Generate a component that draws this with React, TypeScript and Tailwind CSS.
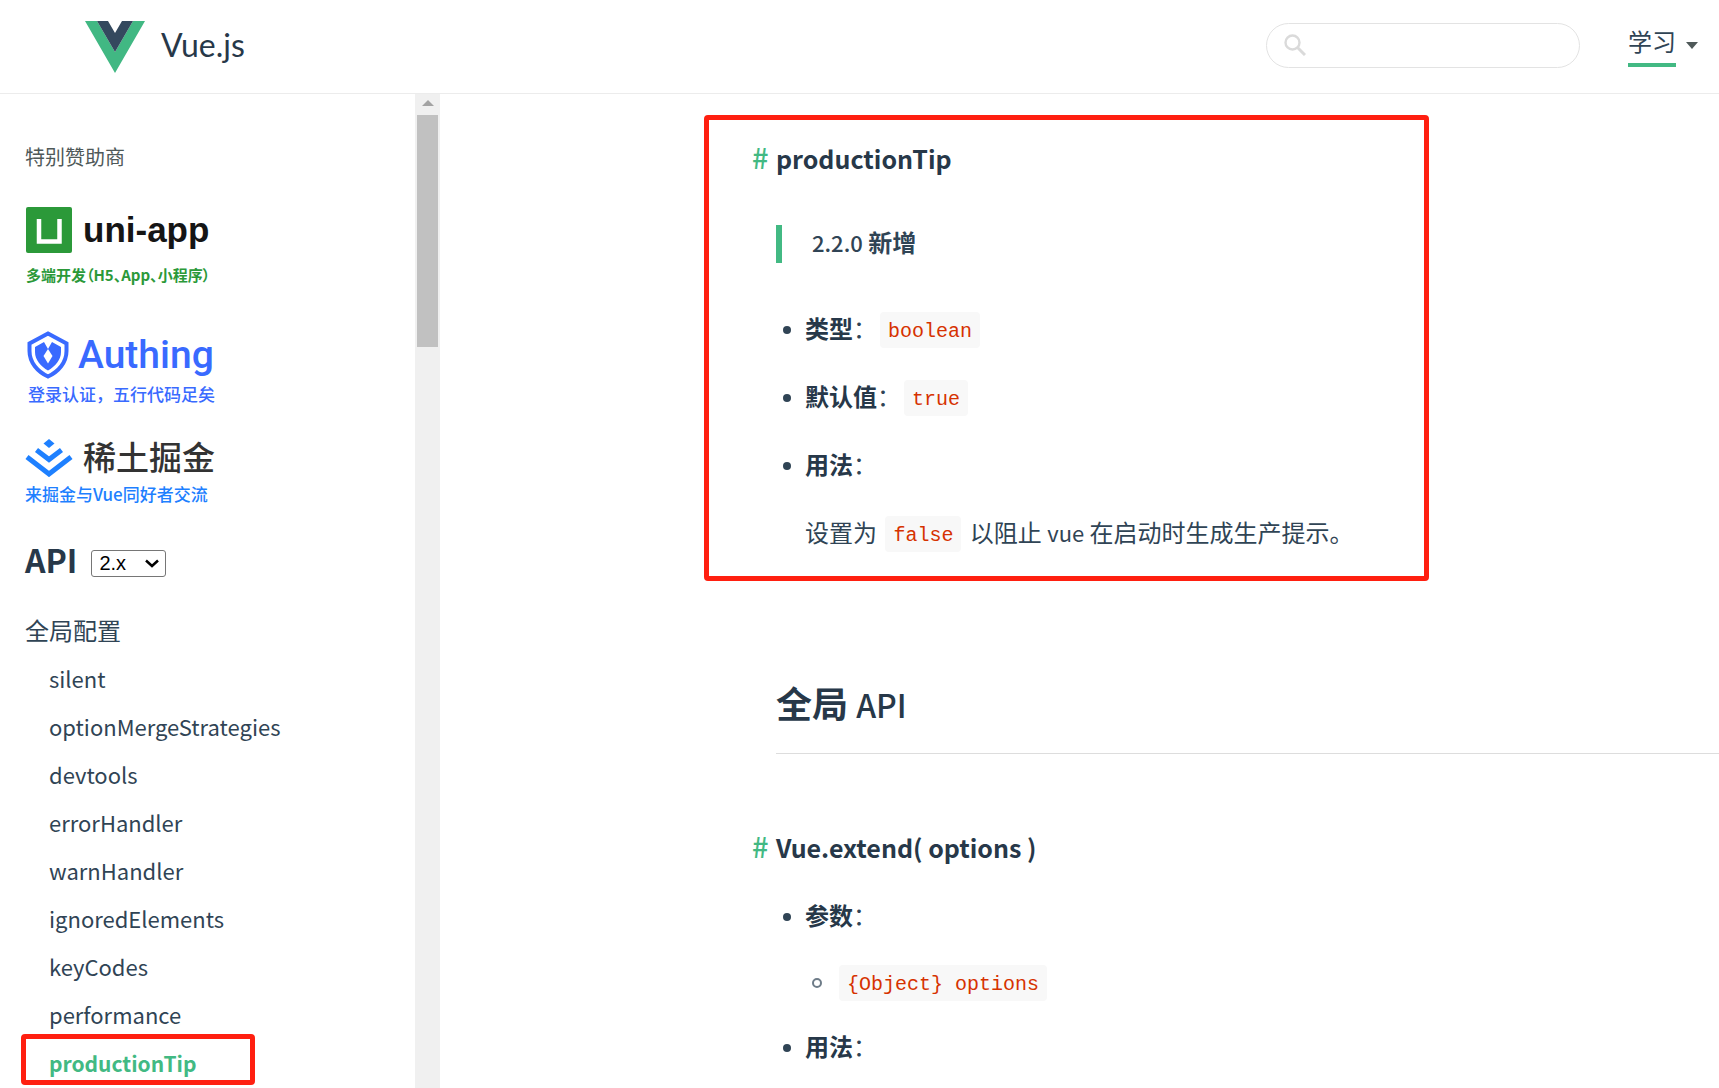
import React from 'react';
import { useState } from 'react';

const menuItems = [
  'silent',
  'optionMergeStrategies',
  'devtools',
  'errorHandler',
  'warnHandler',
  'ignoredElements',
  'keyCodes',
  'performance',
  'productionTip',
];

function Header() {
  return (
    <header className="flex shrink-0 items-center justify-between h-[94px] border-b border-[#ececec] pb-[3px] pl-[85px] pr-[21px]">
      <a href="#" className="flex items-center gap-4">
        <svg viewBox="0 0 60 52" className="w-[60px] h-[52px] mt-1">
          <path d="M0 0H12L30 31L48 0H60L30 52Z" fill="#41b883" />
          <path d="M12 0H23L30 12L37 0H48L30 31Z" fill="#34495e" />
        </svg>
        <span className="font-['Lato',sans-serif] text-[32px] leading-[44px] text-[#273849]">
          Vue.js
        </span>
      </a>

      <div className="flex items-center">
        <label className="flex items-center w-[314px] h-[45px] px-[17px] border border-[#e3e3e3] rounded-full">
          <svg viewBox="0 0 22 22" className="w-[22px] h-[22px] shrink-0" fill="none" stroke="#dadada">
            <circle cx="8.5" cy="8.5" r="7" strokeWidth="2.4" />
            <path d="M13.5 13.5L21 21" strokeWidth="3" />
          </svg>
          <input type="text" aria-label="搜索" className="min-w-0 flex-1 pl-2 outline-none" />
        </label>
        <button className="flex items-center gap-[10px] ml-12">
          <span className="border-b-4 border-[#42b983] pb-1 text-[24px] leading-[36px] text-[#304455]">学习</span>
          <svg viewBox="0 0 12 7" className="w-3 h-[7px]">
            <path d="M0 0H12L6 7Z" fill="#4f5959" />
          </svg>
        </button>
      </div>
    </header>
  );
}

function Sponsors() {
  return (
    <div>
      <p className="text-[20px] leading-[28px] text-[#4f5959]">特别赞助商</p>

      <a href="#" className="block mt-9">
        <span className="flex items-center gap-[11px]">
          <svg viewBox="0 0 46 46" className="w-[46px] h-[46px] ml-px">
            <rect width="46" height="46" rx="2" fill="#2b9939" />
            <path d="M13 12V34.5H33.500V12" fill="none" stroke="#fff" strokeWidth="4.500" />
          </svg>
          <span className="font-['Liberation_Sans',sans-serif] font-bold text-[35px] leading-[40px] text-[#151515]">
            uni-app
          </span>
        </span>
        <span className="block mt-3 pl-px font-bold text-[15px] leading-[20px] text-[#2b9939] [font-feature-settings:'palt']">
          多端开发（H5、App、小程序）
        </span>
      </a>

      <a href="#" className="block mt-[46px] text-[#396aff]">
        <span className="flex items-center gap-[9px]">
          <svg viewBox="0 0 42 48" className="w-[42px] h-[48px] ml-[2px]" fill="none">
            <path
              d="M21 2.500L39.500 12.500V20C39.500 31.500 31.500 40.500 21 45.500C10.500 40.500 2.500 31.500 2.500 20V12.500Z"
              stroke="#396aff"
              strokeWidth="4"
            />
            <path
              d="M17 11L21 18L25 11L34 16V21C34 29 28 35.500 21 39.500C14 35.500 8 29 8 21V16Z"
              fill="#396aff"
            />
            <path d="M21 18L25.500 25L21 32.500L16.500 25Z" fill="#fff" />
          </svg>
          <span className="font-['Roboto',sans-serif] font-medium text-[39px] leading-[48px]">Authing</span>
        </span>
        <span className="block mt-[5px] pl-[3px] font-medium text-[17px] leading-[20px]">登录认证，五行代码足矣</span>
      </a>

      <a href="#" className="block mt-[35px] text-[#1e80ff]">
        <span className="flex items-center gap-[10px]">
          <svg viewBox="0 0 48 38" className="w-[48px] h-[38px]">
            <path d="M24 0L29.500 4.500L24 9L18.500 4.500Z" fill="#1e80ff" />
            <path d="M11.500 11L24 20.500L36.500 11" fill="none" stroke="#1e80ff" strokeWidth="5" />
            <path d="M2 18L24 35L46 18" fill="none" stroke="#1e80ff" strokeWidth="5" />
          </svg>
          <span className="font-medium text-[33px] leading-[34px] pb-1 text-[#333333]">稀土掘金</span>
        </span>
        <span className="block mt-[7px] font-medium text-[17px] leading-[20px]">来掘金与Vue同好者交流</span>
      </a>
    </div>
  );
}

function Sidebar() {
  const [version, setVersion] = useState('2.x');

  return (
    <aside className="flex shrink-0 w-[440px] overflow-hidden">
      <div className="flex-1 pl-[25px] pt-[49px]">
        <Sponsors />

        <div className="flex items-center gap-[14px] mt-[35px]">
          <h2 className="font-bold text-[32px] leading-[40px] text-[#273849]">API</h2>
          <div className="relative mt-2">
            <select
              aria-label="版本"
              value={version}
              onChange={(e) => setVersion(e.target.value)}
              className="block appearance-none w-[75px] h-[27px] pl-[7px] border border-[#767676] rounded-[3px] bg-white font-['Liberation_Sans',sans-serif] text-[20px] leading-[25px] text-black"
            >
              <option>2.x</option>
              <option>1.0</option>
              <option>0.12</option>
            </select>
            <svg viewBox="0 0 14 9" className="absolute right-[7px] top-[9px] w-[14px] h-[9px] pointer-events-none">
              <path d="M1 1.500L7 7L13 1.500" fill="none" stroke="#000" strokeWidth="2.500" />
            </svg>
          </div>
        </div>

        <h3 className="mt-[35px] text-[24px] leading-[32px]">全局配置</h3>
        <ul className="mt-2 pl-6">
          {menuItems.map((item) => (
            <li key={item} className="relative text-[22px] leading-[48px]">
              {item === 'productionTip' ? (
                <>
                  <a href={`#${item}`} className="font-bold text-[21px] text-[#42b983]">{item}</a>
                  <span className="absolute -left-7 -top-[4px] w-[234px] h-[51px] border-5 border-[#ff1f10] rounded" />
                </>
              ) : (
                <a href={`#${item}`}>{item}</a>
              )}
            </li>
          ))}
        </ul>
      </div>

      <div className="flex flex-col items-center w-[25px] -mt-px bg-[#f0f0f0]">
        <svg viewBox="0 0 12 6" className="w-3 h-[6px] mt-[7px] mb-[9px] shrink-0">
          <path d="M0 6H12L6 0Z" fill="#a3a3a3" />
        </svg>
        <div className="w-[21px] h-[232px] shrink-0 bg-[#c1c1c1]" />
      </div>
    </aside>
  );
}

function Title({ id, children }: { id: string; children: React.ReactNode }) {
  return (
    <h3 id={id} className="-ml-6 flex gap-2 font-bold text-[25px] leading-[36px] text-[#273849]">
      <a href={`#${id}`} className="w-4 font-medium text-[29px] leading-[32px] text-[#42b983]">#</a>
      {children}
    </h3>
  );
}

function Item({ children }: { children: React.ReactNode }) {
  return (
    <li className="flex items-start gap-[14px] pl-[7px] min-h-9 leading-[32px]">
      <span className="w-2 h-2 mt-[14px] shrink-0 rounded-full bg-[#304455]" />
      <div>{children}</div>
    </li>
  );
}

function Code({ children }: { children: React.ReactNode }) {
  return (
    <code className="inline-block mx-[3px] px-2 pt-1 rounded-sm bg-[#f8f8f8] font-['Liberation_Mono',monospace] text-[20px] leading-[32px] text-[#d63200] align-top">
      {children}
    </code>
  );
}

function Label({ children }: { children: React.ReactNode }) {
  return <strong className="font-bold text-[#273849]">{children}</strong>;
}

export default function App() {
  return (
    <div className="flex flex-col h-screen overflow-hidden bg-white font-['Noto_Sans_CJK_SC',sans-serif] text-[#304455]">
      <Header />
      <div className="flex flex-1 min-h-0">
        <Sidebar />

        <main className="flex-1 min-w-0 overflow-hidden pl-[264px] pt-[21px] text-[24px]">
          <section className="max-w-[725px] border-5 border-[#ff1f10] rounded pl-[67px] pt-5 pb-6">
            <Title id="productionTip">productionTip</Title>
            <blockquote className="mt-[49px] border-l-6 border-[#42b983] pb-1 pl-[30px] font-bold leading-[34px]">
              <span className="font-medium text-[22px] leading-none">2.2.0</span> 新增
            </blockquote>
            <ul className="mt-[49px] flex flex-col gap-8">
              <Item>
                <Label>类型</Label>：<Code>boolean</Code>
              </Item>
              <Item>
                <Label>默认值</Label>：<Code>true</Code>
              </Item>
              <Item>
                <Label>用法</Label>：
                <p className="mt-9">
                  设置为 <Code>false</Code> 以阻止 <span className="text-[22px] leading-none">vue</span> 在启动时生成生产提示。
                </p>
              </Item>
            </ul>
          </section>

          <section className="pl-[72px]">
            <h2 className="mt-[97px] border-b border-[#dddddd] pb-[27px] font-bold text-[36px] leading-[48px] text-[#273849]">
              全局 <span className="font-medium text-[32px] leading-none">API</span>
            </h2>
            <div className="mt-[75px]">
              <Title id="Vue-extend">Vue.extend( options )</Title>
            </div>
            <ul className="mt-[34px] flex flex-col gap-[29px]">
              <Item>
                <Label>参数</Label>：
                <ul className="mt-[34px]">
                  <li className="flex items-center gap-[14px] pl-[7px]">
                    <span className="w-[10px] h-[10px] shrink-0 rounded-full border-2 border-[#6e7c88]" />
                    <Code>{'{Object} options'}</Code>
                  </li>
                </ul>
              </Item>
              <Item>
                <Label>用法</Label>：
              </Item>
            </ul>
          </section>
        </main>
      </div>
    </div>
  );
}
